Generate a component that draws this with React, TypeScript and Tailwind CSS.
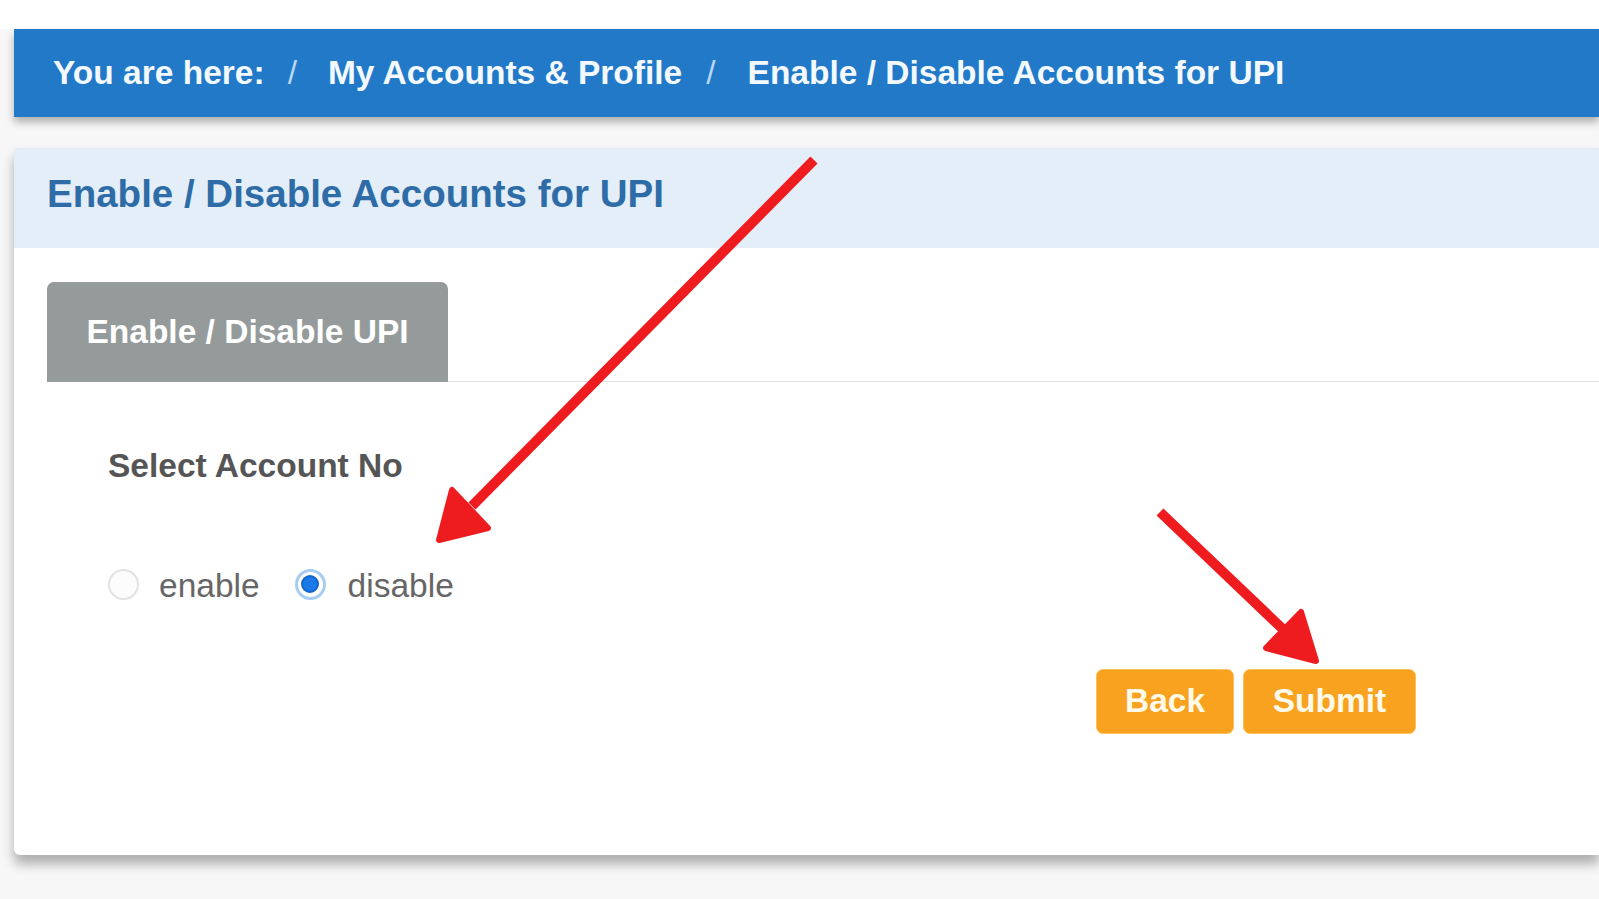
import React from 'react';

function Radio({ checked }: { checked?: boolean }) {
  if (checked) {
    return (
      <span className="flex h-[31px] w-[31px] items-center justify-center rounded-full bg-[#a8cdf0]">
        <span className="flex h-[25px] w-[25px] items-center justify-center rounded-full bg-white">
          <span className="h-[18px] w-[18px] rounded-full border-2 border-[#1565c8] bg-[#1a7ae8]" />
        </span>
      </span>
    );
  }
  return <span className="h-[31px] w-[31px] rounded-full border-2 border-[#e2e2e2] bg-[#fcfcfc]" />;
}

export default function App() {
  return (
    <div className="relative min-h-screen overflow-hidden bg-[#f7f7f7] font-['Liberation_Sans',Arial,sans-serif]">
      <div className="h-[29px] bg-white" />

      {/* breadcrumb bar */}
      <nav className="ml-[14px] flex h-[88px] items-center bg-[#2179c7] pl-[39px] text-[33.5px] font-bold text-[#f3f9ff] shadow-[0_5px_8px_rgba(0,0,0,0.3)]">
        <span>You are here:</span>
        <span className="ml-[23px] mr-[31px] font-normal text-[#b9d6f0]">/</span>
        <span>My Accounts &amp; Profile</span>
        <span className="ml-[24px] mr-[32px] font-normal text-[#b9d6f0]">/</span>
        <span>Enable / Disable Accounts for UPI</span>
      </nav>

      <section className="ml-[14px] mt-[31px] rounded-bl-[6px] bg-white shadow-[0_9px_12px_rgba(0,0,0,0.3)]">
        <header className="flex h-[100px] items-center bg-[#e4eef8] pb-[8px] pl-[33px]">
          <h1 className="text-[38.5px] font-bold text-[#2d6ca6]">Enable / Disable Accounts for UPI</h1>
        </header>

        <div className="pb-[121px] pl-[33px] pt-[34px]">
          <div className="flex border-b border-[#e0e0e0]">
            <div className="relative -mb-px flex h-[100px] w-[401px] items-center justify-center rounded-t-[7px] bg-[#959b9b] text-[33.5px] font-bold text-white">
              Enable / Disable UPI
            </div>
          </div>

          <p className="ml-[61px] mt-[65px] text-[33.5px] font-bold leading-[38px] text-[#555555]">Select Account No</p>

          <div className="ml-[61px] mt-[80px] flex h-[38px] items-center text-[33.5px] text-[#666666]">
            <label className="flex items-center gap-[20px]">
              <Radio />
              <span className="pt-[5px]">enable</span>
            </label>
            <label className="ml-[35px] flex items-center gap-[22px]">
              <Radio checked />
              <span className="pt-[5px]">disable</span>
            </label>
          </div>

          <div className="mt-[66px] flex justify-end gap-[9px] pr-[183px]">
            <button className="h-[65px] w-[138px] rounded-[7px] border border-[#fbc25a] bg-[#f9a21f] text-[33.5px] font-bold text-[#fffaea]">
              Back
            </button>
            <button className="h-[65px] w-[173px] rounded-[7px] border border-[#fbc25a] bg-[#f9a21f] text-[33.5px] font-bold text-[#fffaea]">
              Submit
            </button>
          </div>
        </div>
      </section>

      <div className="h-[60px]" />

      {/* annotation arrows */}
      <svg className="pointer-events-none absolute left-0 top-0" width="1599" height="899" viewBox="0 0 1599 899">
        <g fill="#ef1c1f" stroke="#ef1c1f" strokeLinejoin="round">
          <line x1="814" y1="160" x2="472" y2="506" strokeWidth="10" />
          <polygon points="439,540 488,528 452,490" strokeWidth="6" />
          <line x1="1160" y1="512" x2="1288" y2="634" strokeWidth="10" />
          <polygon points="1316,661 1266,648 1301,612" strokeWidth="6" />
        </g>
      </svg>
    </div>
  );
}
